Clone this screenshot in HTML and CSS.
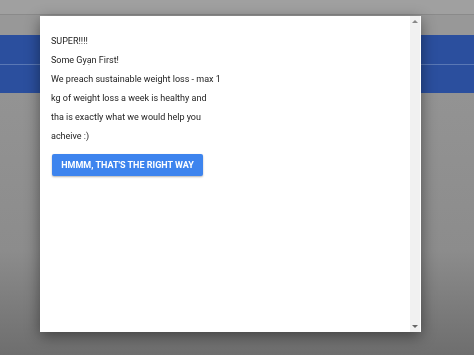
FILE: index.html
```html
<!DOCTYPE html>
<html lang="en">
<head>
    <meta charset="UTF-8">
    <meta name="viewport" content="width=device-width, initial-scale=1.0">
    <title>Gyan</title>
    <link rel="stylesheet" href="styles.css">
</head>
<body>
    <div class="page">
        <div class="topbar"></div>
        <div class="gap"></div>
        <div class="nav">
            <div class="nav-row"></div>
            <div class="nav-row"></div>
        </div>
        <div class="content"></div>
    </div>

    <div class="overlay">
        <div class="dialog">
            <div class="dialog-body">
                <p>SUPER!!!!</p>
                <p>Some Gyạn First!</p>
                <p>We preach sustainable weight loss - max 1</p>
                <p>kg of weight loss a week is healthy and</p>
                <p>tha is exactly what we would help you</p>
                <p>acheive :)</p>
                <button class="btn">HMMM, THAT'S THE RIGHT WAY</button>
            </div>
            <div class="scrollbar">
                <span class="arrow up"></span>
                <span class="arrow down"></span>
            </div>
        </div>
    </div>
</body>
</html>
```

FILE: styles.css
```css
body {
    margin: 0;
    background: #8e8e8e;
    font-family: Roboto, "Liberation Sans", sans-serif;
    height: 355px;
    overflow: hidden;
}

.page {
    display: flex;
    flex-direction: column;
    height: 355px;
}

.topbar {
    height: 14px;
    background: #a0a0a0;
    border-bottom: 1px solid #8a8a8a;
}

.gap {
    height: 20px;
    background: #989898;
}

.nav {
    display: flex;
    flex-direction: column;
}

.nav-row {
    height: 29px;
    background: #2b4f9e;
}

.nav-row + .nav-row {
    border-top: 1px solid #5a78b5;
    height: 28px;
}

.content {
    flex: 1;
    background: linear-gradient(#939393, #8c8c8c 60%, #6e6e6e);
}

.overlay {
    position: fixed;
    inset: 0;
    display: flex;
    padding: 16px 0 0 40px;
}

.dialog {
    width: 381px;
    height: 316px;
    background: #fff;
    box-shadow: 0 4px 14px rgba(0, 0, 0, 0.45);
    display: flex;
}

.dialog-body {
    flex: 1;
    padding: 16px 11px;
    color: #222;
}

.dialog-body p {
    margin: 0;
    font-size: 9px;
    line-height: 19px;
}

.btn {
    display: block;
    margin: 8px 0 0 1px;
    width: 151px;
    height: 22px;
    border: none;
    border-radius: 2px;
    background: #3d84ee;
    color: #fff;
    font-family: Roboto, "Liberation Sans", sans-serif;
    font-weight: 700;
    font-size: 9px;
    box-shadow: 0 1px 2px rgba(0, 0, 0, 0.3);
    padding: 0;
}

.scrollbar {
    width: 10px;
    margin-right: 1px;
    background: #f1f1f1;
    display: flex;
    flex-direction: column;
    justify-content: space-between;
    align-items: center;
    padding: 4px 0;
}

.arrow {
    width: 0;
    height: 0;
    border-left: 3px solid transparent;
    border-right: 3px solid transparent;
}

.arrow.up {
    border-bottom: 3px solid #888;
}

.arrow.down {
    border-top: 3px solid #666;
}
```
